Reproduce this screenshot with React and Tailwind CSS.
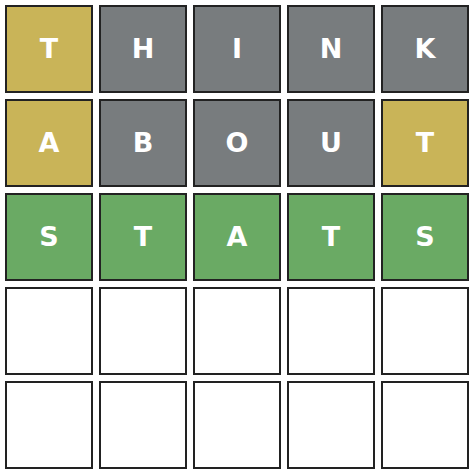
const rows = [
  [['T', 'y'], ['H', 'g'], ['I', 'g'], ['N', 'g'], ['K', 'g']],
  [['A', 'y'], ['B', 'g'], ['O', 'g'], ['U', 'g'], ['T', 'y']],
  [['S', 'c'], ['T', 'c'], ['A', 'c'], ['T', 'c'], ['S', 'c']],
  [['', 'e'], ['', 'e'], ['', 'e'], ['', 'e'], ['', 'e']],
  [['', 'e'], ['', 'e'], ['', 'e'], ['', 'e'], ['', 'e']],
]

const tone = {
  y: 'bg-[#c9b458]',
  g: 'bg-[#787c7e]',
  c: 'bg-[#6aaa64]',
  e: 'bg-white',
}

function Tile({ letter, state }) {
  return (
    <div
      className={`flex h-[88px] w-[88px] items-center justify-center border-2 border-[#222] text-[27px] font-bold text-white ${tone[state]}`}
      style={{ fontFamily: '"DejaVu Sans", Verdana, sans-serif' }}
    >
      {letter}
    </div>
  )
}

export default function App() {
  return (
    <div className="h-[473px] w-[474px] bg-white p-[5px]">
      <div className="grid grid-cols-[repeat(5,88px)] gap-[6px]">
        {rows.map((row, r) =>
          row.map(([letter, state], c) => <Tile key={`${r}-${c}`} letter={letter} state={state} />)
        )}
      </div>
    </div>
  )
}
